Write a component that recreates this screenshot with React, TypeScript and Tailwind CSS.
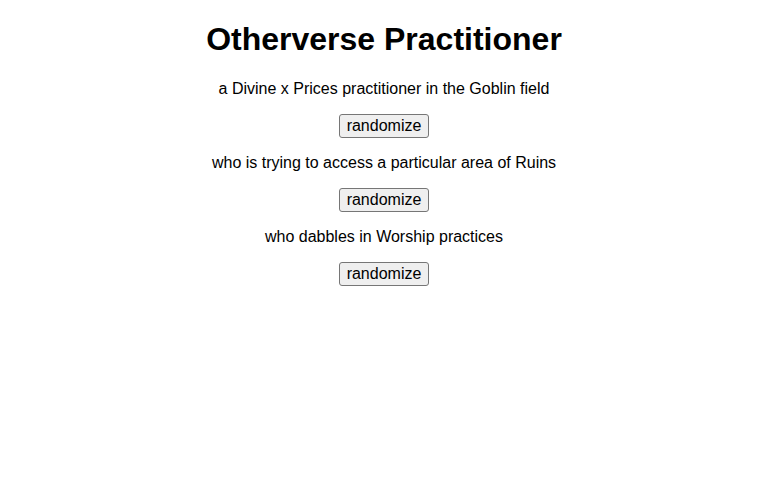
import React, { useState } from "react";

const FIELDS = ["Goblin", "Faerie", "Dragon", "Spirit"];
const PLACES = ["Ruins", "Forest", "Underworld", "Library"];
const PRACTICES = ["Worship", "Alchemy", "Divination", "Necromancy"];

function pick<T>(list: T[]): T {
  return list[Math.floor(Math.random() * list.length)];
}

function RandomButton({ onClick }: { onClick: () => void }) {
  return (
    <div>
      <button
        onClick={onClick}
        className="text-[16px] leading-[normal] text-black bg-[#efefef] border border-[#767676] rounded-[3px] px-[7px] py-[2px] hover:bg-[#e5e5e5]"
      >
        randomize
      </button>
    </div>
  );
}

export default function App() {
  const [field, setField] = useState("Goblin");
  const [place, setPlace] = useState("Ruins");
  const [practice, setPractice] = useState("Worship");

  return (
    <div className="min-h-[480px] bg-white text-black text-center font-['Liberation_Sans',Arial,sans-serif] text-[16px] pt-px">
      <h1 className="text-[32px] font-bold leading-[normal] mt-[20.44px] mb-[21.44px]">
        Otherverse Practitioner
      </h1>
      <p className="leading-[normal] my-4">
        a Divine x Prices practitioner in the {field} field
      </p>
      <RandomButton onClick={() => setField(pick(FIELDS))} />
      <p className="leading-[normal] my-4">
        who is trying to access a particular area of {place}
      </p>
      <RandomButton onClick={() => setPlace(pick(PLACES))} />
      <p className="leading-[normal] my-4">who dabbles in {practice} practices</p>
      <RandomButton onClick={() => setPractice(pick(PRACTICES))} />
    </div>
  );
}
